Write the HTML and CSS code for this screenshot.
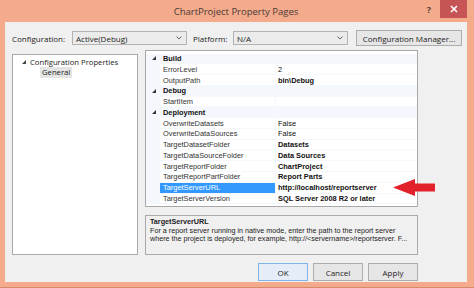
FILE: index.html
```html
<!DOCTYPE html>
<html>
<head>
<meta charset="utf-8">
<link rel="stylesheet" href="styles.css">
</head>
<body>
<div class="window">
  <div class="titlebar">
    <div></div>
    <div class="title">ChartProject Property Pages</div>
    <div class="caption-btns">
      <span class="help">?</span>
      <span class="close"><svg width="8" height="8" viewBox="0 0 8 8"><path d="M1 1L7 7M7 1L1 7" stroke="#fff" stroke-width="1.6"/></svg></span>
    </div>
  </div>
  <div class="client">
    <div class="toolbar">
      <span class="lbl lbl-config">Configuration:</span>
      <div class="combo combo1"><span>Active(Debug)</span><svg class="chev" width="6" height="4" viewBox="0 0 6 4"><path d="M0.5 0.5L3 3L5.5 0.5" stroke="#666" fill="none" stroke-width="1"/></svg></div>
      <span class="lbl lbl-platform">Platform:</span>
      <div class="combo combo2"><span>N/A</span><svg class="chev" width="6" height="4" viewBox="0 0 6 4"><path d="M0.5 0.5L3 3L5.5 0.5" stroke="#666" fill="none" stroke-width="1"/></svg></div>
      <div class="btn btn-cm">Configuration Manager...</div>
    </div>
    <div class="main">
      <div class="tree">
        <div class="tnode"><svg class="tri" width="4" height="4" viewBox="0 0 4 4"><path d="M4 0L4 4L0 4Z" fill="#444"/></svg><span>Configuration Properties</span></div>
        <div class="tnode child"><span class="sel">General</span></div>
      </div>
      <div class="rightcol">
        <div class="grid">
          <div class="row cat"><span class="gut"><svg class="tri" width="4" height="4" viewBox="0 0 4 4"><path d="M4 0L4 4L0 4Z" fill="#333"/></svg></span><span class="cname">Build</span></div>
          <div class="row"><span class="gut"></span><span class="name">ErrorLevel</span><span class="val">2</span></div>
          <div class="row"><span class="gut"></span><span class="name">OutputPath</span><span class="val b">bin\Debug</span></div>
          <div class="row cat"><span class="gut"><svg class="tri" width="4" height="4" viewBox="0 0 4 4"><path d="M4 0L4 4L0 4Z" fill="#333"/></svg></span><span class="cname">Debug</span></div>
          <div class="row"><span class="gut"></span><span class="name">StartItem</span><span class="val"></span></div>
          <div class="row cat"><span class="gut"><svg class="tri" width="4" height="4" viewBox="0 0 4 4"><path d="M4 0L4 4L0 4Z" fill="#333"/></svg></span><span class="cname">Deployment</span></div>
          <div class="row"><span class="gut"></span><span class="name">OverwriteDatasets</span><span class="val">False</span></div>
          <div class="row"><span class="gut"></span><span class="name">OverwriteDataSources</span><span class="val">False</span></div>
          <div class="row"><span class="gut"></span><span class="name">TargetDatasetFolder</span><span class="val b">Datasets</span></div>
          <div class="row"><span class="gut"></span><span class="name">TargetDataSourceFolder</span><span class="val b">Data Sources</span></div>
          <div class="row"><span class="gut"></span><span class="name">TargetReportFolder</span><span class="val b">ChartProject</span></div>
          <div class="row"><span class="gut"></span><span class="name">TargetReportPartFolder</span><span class="val b">Report Parts</span></div>
          <div class="row"><span class="gut"></span><span class="name selected">TargetServerURL</span><span class="val b">http://localhost/reportserver</span></div>
          <div class="row"><span class="gut"></span><span class="name">TargetServerVersion</span><span class="val b">SQL Server 2008 R2 or later</span></div>
        </div>
        <div class="desc">
          <div class="desc-title">TargetServerURL</div>
          <div class="desc-text">For a report server running in native mode, enter the path to the report server where the project is deployed, for example, http://&lt;servername&gt;/reportserver. F...</div>
        </div>
      </div>
      <svg class="arrow" width="44" height="17" viewBox="0 0 44 17"><path d="M0 8.5L22 0L22 4.5L42 4.5L42 12.5L22 12.5L22 17Z" fill="#e3212b"/></svg>
    </div>
    <div class="buttons">
      <div class="btn btn-ok">OK</div>
      <div class="btn">Cancel</div>
      <div class="btn">Apply</div>
    </div>
  </div>
</div>
</body>
</html>
```
FILE: styles.css
```css
html, body {
  margin: 0;
  padding: 0;
  background: #f4ab8c;
}
.window {
  width: 474px;
  height: 288px;
  background: #f4ab8c;
  box-sizing: border-box;
  padding: 0 7px 5px 5px;
  display: flex;
  flex-direction: column;
  font-family: "Open Sans", "Liberation Sans", sans-serif;
  border-bottom: 1px solid #d98a6c;
}
.titlebar {
  height: 22px;
  display: grid;
  grid-template-columns: 1fr auto 1fr;
  align-items: start;
}
.title {
  font-size: 9.6px;
  color: #4a3a36;
  line-height: 24px;
  letter-spacing: -0.05px;
}
.caption-btns {
  display: flex;
  justify-content: flex-end;
  align-items: flex-start;
}
.help {
  font-size: 9px;
  font-weight: bold;
  color: #5a3f36;
  line-height: 19px;
  margin-right: 9px;
}
.close {
  width: 27px;
  height: 18px;
  background: #c75454;
  display: flex;
  align-items: center;
  justify-content: center;
}
.client {
  flex: 1;
  background: #f0f0f0;
  display: flex;
  flex-direction: column;
  padding: 8px 5px 0 7px;
  position: relative;
}
.toolbar {
  display: flex;
  align-items: center;
  height: 16px;
  font-size: 8px;
  color: #222;
}
.lbl-config { width: 60px; }
.lbl-platform { width: 40px; }
.combo {
  box-sizing: border-box;
  height: 14px;
  width: 115px;
  border: 1px solid #b3b3b3;
  background: #ebebeb;
  display: flex;
  align-items: center;
  justify-content: space-between;
  padding: 0 4px 0 3px;
}
.combo1 { margin-right: 6px; }
.combo2 { margin-right: 8px; }
.btn {
  box-sizing: border-box;
  border: 1px solid #adadad;
  background: #e6e6e6;
  display: flex;
  align-items: center;
  justify-content: center;
  font-size: 8px;
  color: #222;
}
.btn-cm {
  width: 106px;
  height: 16px;
}
.main {
  margin-top: 4px;
  display: flex;
  align-items: flex-start;
  position: relative;
}
.tree {
  box-sizing: border-box;
  width: 126px;
  height: 201px;
  margin-top: 4px;
  border: 1px solid #a9a9a9;
  background: #fff;
  padding-top: 1px;
  font-size: 7.7px;
  color: #222;
}
.tnode {
  display: flex;
  align-items: center;
  height: 11px;
  padding-left: 9px;
}
.tnode .tri { margin-right: 4px; }
.tnode.child { padding-left: 27px; height: 11px; }
.sel {
  background: #e4e4e4;
  padding: 0 2px;
  line-height: 11px;
}
.rightcol {
  margin-left: 7px;
  width: 273px;
  display: flex;
  flex-direction: column;
  gap: 8px;
}
.grid {
  box-sizing: border-box;
  height: 157px;
  border: 1px solid #a9a9a9;
  background: #fff;
  padding-top: 2.6px;
  font-family: "Liberation Sans", Arial, sans-serif;
  font-size: 7.4px;
  color: #222;
}
.row {
  display: flex;
  height: 10.77px;
  box-sizing: border-box;
  border-bottom: 1px solid #f4f7fc;
  align-items: stretch;
}
.gut {
  width: 14px;
  flex: none;
  background: #f4f7fc;
  display: flex;
  align-items: center;
  justify-content: center;
  padding-left: 2px;
  box-sizing: border-box;
}
.row.cat { background: #f4f7fc; }
.cname {
  font-weight: bold;
  padding-left: 3px;
  display: flex;
  align-items: center;
  color: #111;
}
.name {
  width: 116px;
  flex: none;
  box-sizing: border-box;
  padding-left: 3px;
  border-right: 1px solid #f4f7fc;
  display: flex;
  align-items: center;
  color: #333;
}
.name.selected {
  background: #3399ff;
  color: #fff;
}
.val {
  padding-left: 2px;
  display: flex;
  align-items: center;
  color: #111;
}
.val.b { font-weight: bold; }
.desc {
  box-sizing: border-box;
  height: 40px;
  border: 1px solid #a9a9a9;
  background: #f0f0f0;
  padding: 2px 4px;
  font-family: "Liberation Sans", Arial, sans-serif;
  font-size: 7.2px;
  color: #222;
  line-height: 8px;
}
.desc-title { font-weight: bold; margin-bottom: 1px; }
.arrow {
  position: absolute;
  left: 381px;
  top: 129px;
}
.buttons {
  margin-top: 8px;
  display: flex;
  justify-content: flex-end;
  gap: 5px;
  padding-right: 44px;
}
.buttons .btn {
  width: 50px;
  height: 18px;
}
.btn-ok {
  border-color: #7eb4ea;
  background: #e5eef8;
}
```
